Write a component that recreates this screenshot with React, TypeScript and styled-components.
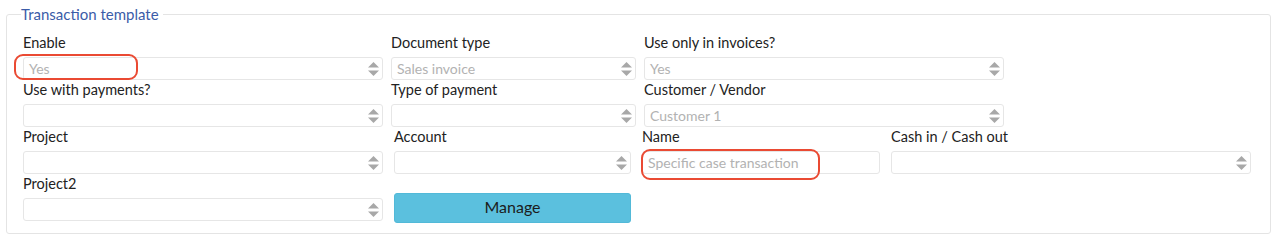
import React from "react";
import styled, { createGlobalStyle } from "styled-components";

const GlobalStyle = createGlobalStyle`
  html, body { margin: 0; padding: 0; background: #ffffff; }
  body { font-family: "Lato", "Open Sans", Arial, sans-serif; color: #333333; }
  * { box-sizing: border-box; }
`;

const Page = styled.div`
  width: 1280px;
  height: 240px;
  padding: 4px 9px 0 6px;
`;

const Fieldset = styled.fieldset`
  margin: 0;
  padding: 9px 16px 10px 16px;
  border: 1px solid #e4e4e4;
  border-radius: 3px;
  width: 1265px;
`;

const Legend = styled.legend`
  margin-left: -2px;
  padding: 0 4px 0 0;
  font-size: 15px;
  line-height: 20px;
  color: #3b5ca8;
`;

const Row = styled.div<{ $cols: string; $gap: number }>`
  display: grid;
  grid-template-columns: ${(p) => p.$cols};
  column-gap: ${(p) => p.$gap}px;
`;

const Field = styled.div`
  position: relative;
  display: flex;
  flex-direction: column;
`;

const Label = styled.div`
  font-size: 14.5px;
  line-height: 20px;
  height: 20px;
  margin-bottom: 4px;
  color: #222222;
  white-space: nowrap;
`;

const Box = styled.div`
  height: 23px;
  border: 1px solid #e6e6e6;
  border-radius: 3px;
  background: #ffffff;
  display: flex;
  align-items: center;
  justify-content: space-between;
  padding: 0 3px 0 5px;
`;

const Value = styled.span`
  font-size: 14px;
  color: #b2b2b2;
  white-space: nowrap;
`;

const Arrows = styled.svg`
  width: 11px;
  height: 14px;
  flex: none;
`;

const Spacer = styled.div`
  height: 19px;
`;

const Button = styled.button`
  height: 30px;
  border: 1px solid #52b9d8;
  border-radius: 3px;
  background: #5bc0de;
  color: #1c1c1c;
  font-family: "Lato", "Open Sans", Arial, sans-serif;
  font-size: 16px;
  line-height: 26px;
  padding: 0 0 2px 0;
  cursor: pointer;
`;

const Ring = styled.div<{ $l: number; $t: number; $w: number; $h: number }>`
  position: absolute;
  left: ${(p) => p.$l}px;
  top: ${(p) => p.$t}px;
  width: ${(p) => p.$w}px;
  height: ${(p) => p.$h}px;
  border: 2px solid #ea4a33;
  border-radius: 9px;
  pointer-events: none;
`;

const ArrowIcon = () => (
  <Arrows viewBox="0 0 11 14">
    <polygon points="0,5.5 5.5,0 11,5.5" fill="#a8a8a8" />
    <polygon points="0,8.5 11,8.5 5.5,14" fill="#a8a8a8" />
  </Arrows>
);

const Select = ({ label, value }: { label: string; value?: string }) => (
  <Field>
    <Label>{label}</Label>
    <Box>
      <Value>{value ?? ""}</Value>
      <ArrowIcon />
    </Box>
  </Field>
);

const FOUR = "360px 237px 238px 360px";
const THREE = "360px 245px 360px";

export default function App() {
  return (
    <Page>
      <GlobalStyle />
      <Fieldset>
        <Legend>Transaction template</Legend>
        <Row $cols={THREE} $gap={8}>
          <Field>
            <Label>Enable</Label>
            <Box>
              <Value>Yes</Value>
              <ArrowIcon />
            </Box>
            <Ring $l={-9} $t={21} $w={124} $h={26} />
          </Field>
          <Select label="Document type" value="Sales invoice" />
          <Select label="Use only in invoices?" value="Yes" />
        </Row>
        <Row $cols={THREE} $gap={8}>
          <Select label="Use with payments?" />
          <Select label="Type of payment" />
          <Select label="Customer / Vendor" value="Customer 1" />
        </Row>
        <Row $cols={FOUR} $gap={11}>
          <Select label="Project" />
          <Select label="Account" />
          <Field>
            <Label>Name</Label>
            <Box>
              <Value>Specific case transaction</Value>
            </Box>
            <Ring $l={-1} $t={22} $w={179} $h={31} />
          </Field>
          <Select label="Cash in / Cash out" />
        </Row>
        <Row $cols={FOUR} $gap={11}>
          <Select label="Project2" />
          <Field>
            <Spacer />
            <Button type="button">Manage</Button>
          </Field>
        </Row>
      </Fieldset>
    </Page>
  );
}
